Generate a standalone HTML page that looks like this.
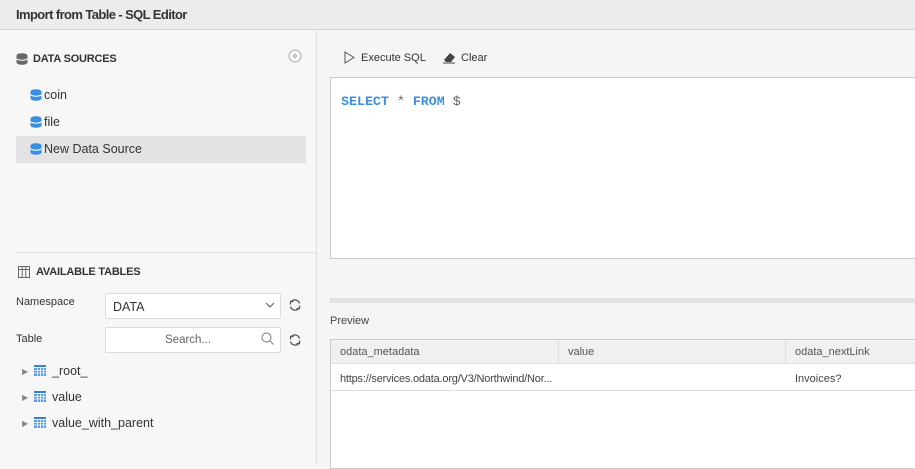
<!DOCTYPE html>
<html><head><style>
*{box-sizing:border-box;margin:0;padding:0}
body{width:915px;height:464px;overflow:hidden;background:#f5f5f5;font-family:"Liberation Sans",sans-serif;font-size:11px;color:#333;position:relative}
.a{position:absolute}
</style></head><body>
<div class="a" style="left:0;top:0;width:915px;height:30px;background:#ececec;border-bottom:1px solid #d4d4d4"></div>
<div class="a" style="left:16px;top:7px;font-size:13px;color:#333;font-weight:bold;letter-spacing:-0.6px">Import from Table - SQL Editor</div>
<div class="a" style="left:0;top:30px;width:317px;height:434px;background:#f7f7f7;border-right:1px solid #e0e0e0"></div>
<svg class="a" style="left:16px;top:53px" width="12" height="12" viewBox="0 0 12 12"><ellipse cx="6" cy="2.5" rx="5.5" ry="2.3" fill="#666"/><rect x="0.5" y="2.5" width="11" height="7" fill="#666"/><ellipse cx="6" cy="9.5" rx="5.5" ry="2.3" fill="#666"/><path d="M0.5 6Q6 8.5 11.5 6" stroke="#f7f7f7" fill="none"/></svg>
<div class="a" style="left:33px;top:53px;font-size:11px;color:#333;font-weight:bold;letter-spacing:-0.2px">DATA SOURCES</div>
<svg class="a" style="left:288px;top:49px" width="14" height="14"><circle cx="7" cy="7" r="6" fill="none" stroke="#aaa"/><path d="M7 4v6M4 7h6" stroke="#aaa"/></svg>
<div class="a" style="left:16px;top:136px;width:290px;height:27px;background:#e3e3e3"></div>
<svg width="0" height="0" style="position:absolute"><defs><g id="d"><ellipse cx="6" cy="2.5" rx="5.5" ry="2.3" fill="#3b8fe0"/><rect x="0.5" y="2.5" width="11" height="7" fill="#3b8fe0"/><ellipse cx="6" cy="9.5" rx="5.5" ry="2.3" fill="#3b8fe0"/><path d="M0.5 6Q6 8.5 11.5 6" stroke="#fff" fill="none"/></g></defs></svg>
<svg class="a" style="left:30px;top:89px" width="12" height="13"><use href="#d"/></svg><div class="a" style="left:44px;top:88px;font-size:12.5px">coin</div>
<svg class="a" style="left:30px;top:116px" width="12" height="13"><use href="#d"/></svg><div class="a" style="left:44px;top:115px;font-size:12.5px">file</div>
<svg class="a" style="left:30px;top:143px" width="12" height="13"><use href="#d"/></svg><div class="a" style="left:44px;top:142px;font-size:12.5px">New Data Source</div>
<div class="a" style="left:16px;top:252px;width:300px;height:1px;background:#e0e0e0"></div>
<svg class="a" style="left:18px;top:266px" width="12" height="12"><rect x="0.5" y="0.5" width="11" height="11" fill="none" stroke="#666"/><path d="M0.5 3.5h11M4.2 0.5v11M7.8 0.5v11" stroke="#666"/></svg>
<div class="a" style="left:36px;top:266px;font-size:11px;font-weight:bold;letter-spacing:-0.2px">AVAILABLE TABLES</div>
<div class="a" style="left:16px;top:296px">Namespace</div>
<div class="a" style="left:105px;top:293px;width:176px;height:26px;background:#fff;border:1px solid #ddd;border-radius:2px;padding:6px 7px;font-size:12.5px">DATA</div>
<svg class="a" style="left:265px;top:301px" width="10" height="8"><path d="M1 2l4 4 4-4" stroke="#555" fill="none"/></svg>
<svg class="a" style="left:288px;top:298px" width="14" height="14" viewBox="0 0 14 14"><path d="M2.5 8.5A4.7 4.7 0 0 0 11 10M11.5 5.5A4.7 4.7 0 0 0 3 4" stroke="#555" fill="none" stroke-width="1.3"/><path d="M11.5 7.5v3h-3M2.5 6.5v-3h3" stroke="#555" fill="none" stroke-width="1.2"/></svg>
<div class="a" style="left:16px;top:333px">Table</div>
<div class="a" style="left:105px;top:327px;width:176px;height:26px;background:#fff;border:1px solid #ddd;border-radius:2px;padding:6px 0 0 59px;color:#666;font-size:11.5px">Search...</div>
<svg class="a" style="left:261px;top:332px" width="13" height="13"><circle cx="5.5" cy="5.5" r="4.5" fill="none" stroke="#777"/><path d="M9 9l3.5 3.5" stroke="#777"/></svg>
<svg class="a" style="left:288px;top:333px" width="14" height="14" viewBox="0 0 14 14"><path d="M2.5 8.5A4.7 4.7 0 0 0 11 10M11.5 5.5A4.7 4.7 0 0 0 3 4" stroke="#555" fill="none" stroke-width="1.3"/><path d="M11.5 7.5v3h-3M2.5 6.5v-3h3" stroke="#555" fill="none" stroke-width="1.2"/></svg>
<svg width="0" height="0" style="position:absolute"><defs><g id="t"><rect x="0" y="0" width="12" height="2" fill="#3b7ddd"/><path d="M0 3h12v8H0z" fill="#5a9ae8"/><path d="M0 5.5h12M0 8h12M3.5 3v8M6.5 3v8M9.5 3v8" stroke="#fff" stroke-width="0.8"/></g></defs></svg>
<div class="a" style="left:22px;top:367px;font-size:8px;color:#888">▶</div><svg class="a" style="left:34px;top:365px" width="12" height="11"><use href="#t"/></svg><div class="a" style="left:52px;top:364px;font-size:12.5px">_root_</div>
<div class="a" style="left:22px;top:393px;font-size:8px;color:#888">▶</div><svg class="a" style="left:34px;top:391px" width="12" height="11"><use href="#t"/></svg><div class="a" style="left:52px;top:390px;font-size:12.5px">value</div>
<div class="a" style="left:22px;top:419px;font-size:8px;color:#888">▶</div><svg class="a" style="left:34px;top:417px" width="12" height="11"><use href="#t"/></svg><div class="a" style="left:52px;top:416px;font-size:12.5px">value_with_parent</div>
<svg class="a" style="left:344px;top:51px" width="11" height="13"><path d="M1 1l9 5.5-9 5.5z" fill="none" stroke="#555"/></svg>
<div class="a" style="left:361px;top:52px">Execute SQL</div>
<svg class="a" style="left:442px;top:51px" width="14" height="13"><path d="M2 9l6-7 5 4-4 5H4z" fill="#444"/><path d="M1 12h12" stroke="#444"/></svg>
<div class="a" style="left:461px;top:52px">Clear</div>
<div class="a" style="left:330px;top:77px;width:590px;height:182px;background:#fff;border:1px solid #ccc"></div>
<div class="a" style="left:341px;top:94px;font-family:'Liberation Mono',monospace;font-size:13.3px;font-weight:bold;color:#3b8fe0;white-space:pre">SELECT <span style="color:#666;font-weight:normal">*</span> FROM <span style="color:#666;font-weight:normal">$</span></div>
<div class="a" style="left:330px;top:298px;width:585px;height:5px;background:#e2e2e2"></div>
<div class="a" style="left:330px;top:315px;font-size:11px;color:#444">Preview</div>
<div class="a" style="left:330px;top:339px;width:590px;height:130px;background:#fff;border:1px solid #ccc"></div>
<div class="a" style="left:331px;top:340px;width:590px;height:24px;background:#f0f0f0;border-bottom:1px solid #ddd"></div>
<div class="a" style="left:558px;top:340px;width:1px;height:24px;background:#ddd"></div>
<div class="a" style="left:785px;top:340px;width:1px;height:24px;background:#ddd"></div>
<div class="a" style="left:340px;top:346px;font-size:11px;color:#555">odata_metadata</div>
<div class="a" style="left:568px;top:346px;font-size:11px;color:#555">value</div>
<div class="a" style="left:795px;top:346px;font-size:11px;color:#555">odata_nextLink</div>
<div class="a" style="left:331px;top:390px;width:590px;height:1px;background:#ddd"></div>
<div class="a" style="left:340px;top:373px;font-size:11px;color:#444;letter-spacing:-0.2px">https://services.odata.org/V3/Northwind/Nor...</div>
<div class="a" style="left:795px;top:373px;font-size:11px;color:#444">Invoices?</div>
</body></html>
